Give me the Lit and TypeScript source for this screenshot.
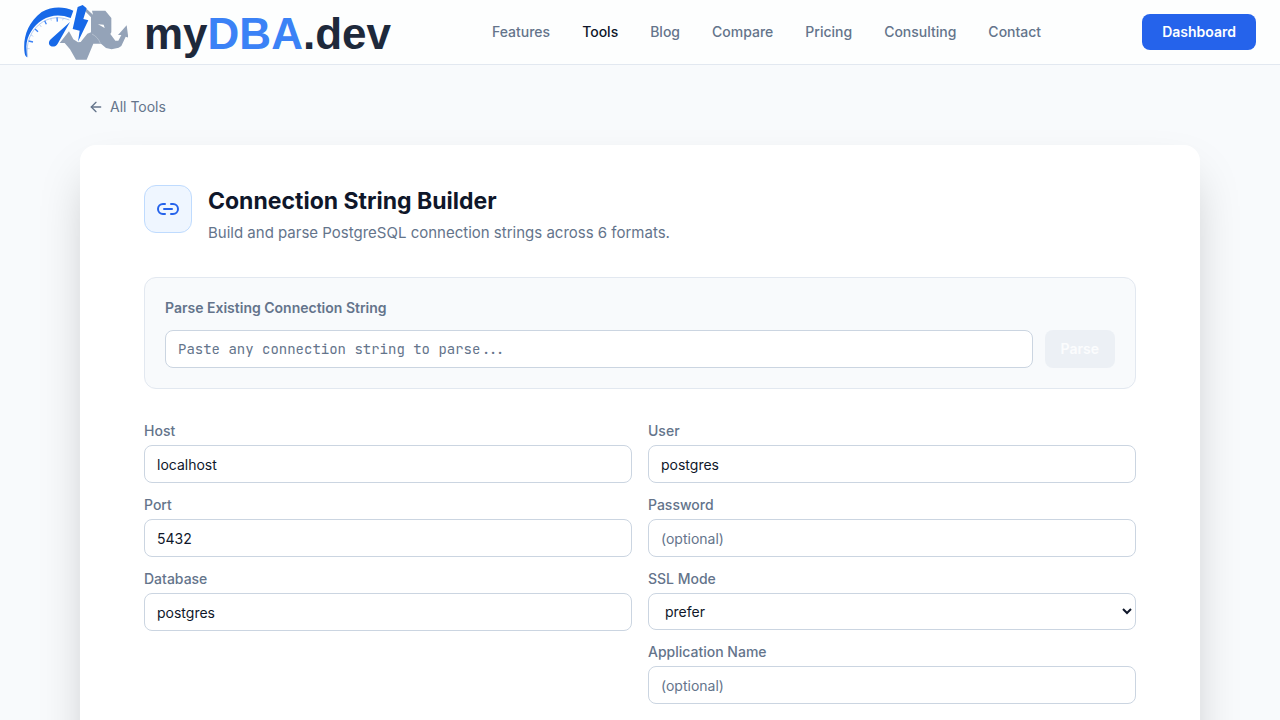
import { LitElement, html, css } from "lit";
import { customElement, state } from "lit/decorators.js";

interface NavItem {
  label: string;
  active?: boolean;
}

const NAV: NavItem[] = [
  { label: "Features" },
  { label: "Tools", active: true },
  { label: "Blog" },
  { label: "Compare" },
  { label: "Pricing" },
  { label: "Consulting" },
  { label: "Contact" },
];

const SSL_MODES = ["disable", "allow", "prefer", "require", "verify-ca", "verify-full"];

@customElement("site-header")
class SiteHeader extends LitElement {
  static styles = css`
    :host {
      display: block;
      background: #fdfefe;
      border-bottom: 1px solid #e2e8f0;
    }
    .bar {
      display: flex;
      align-items: center;
      justify-content: space-between;
      height: 64px;
      padding: 0 24px;
    }
    a {
      text-decoration: none;
    }
    .brand {
      display: flex;
      align-items: center;
      gap: 16px;
    }
    .mark {
      display: block;
      width: 104px;
      height: 56px;
    }
    .word {
      font: 700 44px/60px "Liberation Sans", Arial, sans-serif;
      color: #1e293b;
      white-space: nowrap;
      padding-top: 4px;
    }
    .accent {
      color: #3b82f6;
    }
    nav {
      display: flex;
      gap: 32px;
    }
    .link {
      font-size: 14px;
      line-height: 20px;
      font-weight: 500;
      color: #64748b;
    }
    .link.active {
      color: #0f172a;
    }
    .cta {
      padding: 8px 20px;
      border-radius: 8px;
      background: #2563eb;
      color: #fff;
      font-size: 14px;
      line-height: 20px;
      font-weight: 600;
    }
  `;

  render() {
    return html`
      <header class="bar">
        <a class="brand" href="#" aria-label="myDBA.dev home">
          <svg class="mark" viewBox="42 12 312 168" aria-hidden="true">
            <path fill="#94a3b8" d="M149 129 177 94 190 118 204 127 212 126 232 101 243 97V52L222 30 230 27 249 44 246 32H286L304 54V97L301 102 316 122H325L334 105 324 105 350 76 355 113 347 110 334 138 326 143 305 148 288 144 273 131H250L230 179H198L180 148L164 129Z"/>
            <path fill="#fdfefe" d="M264 73 281 74 284 84Z"/>
            <path fill="none" stroke="#c3ccd8" stroke-width="2" d="M246 102 C258 108 266 117 271 130"/>
            <path fill="none" stroke="#8fb2ea" stroke-width="2" d="M53 172C46 130 62 88 98 66 124 50 153 50 178 60"/>
            <path fill="#1769e8" d="M44 160C38 118 50 70 95 36 126 19 160 19 190 32L182 54C150 42 122 45 97 60 70 77 50 108 49 140L51 172C47 170 45 166 44 160Z"/>
            <path fill="none" stroke="#3b82f6" stroke-width="4" d="M56 123 69 126M75 87 84 95M104 62 109 73M141 52 142 65"/>
            <path fill="none" stroke="#a3c0ee" stroke-width="2" d="M51 146H59M63 105 70 109M89 74 94 81M122 55 124 62M160 54 158 61"/>
            <path fill="#1769e8" d="M180 66 143 131C137 142 122 143 117 132 116 125 119 121 123 117Z"/>
            <path fill="#1769e8" d="M188 87 203 21 218 15 230 25 220 57 235 61 204 125 209 92Z"/>
          </svg>
          <span class="word">my<span class="accent">DBA</span>.dev</span>
        </a>
        <nav aria-label="Main">
          ${NAV.map(
            (n) => html`<a class="link ${n.active ? "active" : ""}" href="#">${n.label}</a>`
          )}
        </nav>
        <a class="cta" href="#">Dashboard</a>
      </header>
    `;
  }
}

@customElement("app-root")
class AppRoot extends LitElement {
  @state() private source = "";

  static styles = css`
    :host {
      display: block;
      min-height: 100vh;
      background: #f8fafc;
      color: #0f172a;
      font-family: Inter, "Liberation Sans", sans-serif;
      font-size: 14px;
      line-height: 20px;
    }
    *,
    *::before {
      box-sizing: border-box;
    }
    main {
      max-width: 1120px;
      margin: 0 auto;
      padding: 32px 0;
    }
    .back {
      display: flex;
      align-items: center;
      gap: 6px;
      width: fit-content;
      padding: 0 8px;
      color: #64748b;
      text-decoration: none;
    }
    .back svg {
      width: 16px;
      height: 16px;
    }
    .card {
      margin-top: 28px;
      padding: 40px 64px 128px;
      border-radius: 16px;
      background: #fff;
      box-shadow: 0 25px 50px -12px rgba(0, 0, 0, 0.25);
    }
    .intro {
      display: flex;
      gap: 16px;
    }
    .badge {
      display: grid;
      place-items: center;
      width: 48px;
      height: 48px;
      border: 1px solid #bfdbfe;
      border-radius: 12px;
      background: #eff6ff;
      color: #2563eb;
    }
    .badge svg {
      width: 24px;
      height: 24px;
    }
    h1 {
      margin: 0;
      font-size: 23px;
      line-height: 32px;
      font-weight: 700;
    }
    .lead {
      margin: 4px 0 0;
      font-size: 15px;
      line-height: 24px;
      color: #64748b;
    }
    .parse {
      display: grid;
      gap: 12px;
      margin: 32px 0;
      padding: 20px;
      border: 1px solid #e2e8f0;
      border-radius: 12px;
      background: #f8fafc;
    }
    .parse label {
      font-weight: 600;
      color: #64748b;
    }
    .row {
      display: flex;
      gap: 12px;
    }
    input,
    select {
      display: block;
      width: 100%;
      min-width: 0;
      height: 38px;
      padding: 8px 12px;
      border: 1px solid #cbd5e1;
      border-radius: 8px;
      background: #fff;
      color: #0f172a;
      font: inherit;
    }
    select {
      height: 37px;
    }
    input::placeholder {
      color: #64748b;
      opacity: 1;
    }
    .mono {
      flex: 1;
      font-family: "JetBrains Mono", "Liberation Mono", monospace;
    }
    button {
      padding: 8px 16px;
      border: 0;
      border-radius: 8px;
      background: #2563eb;
      color: #fff;
      font: inherit;
      font-weight: 600;
    }
    button:disabled {
      background: #e2e8f0;
      opacity: 0.5;
    }
    .fields {
      display: grid;
      grid-template-columns: 1fr 1fr;
      gap: 16px;
      align-items: start;
    }
    .column {
      display: grid;
      gap: 12px;
    }
    .field {
      display: grid;
      gap: 4px;
    }
    .field label {
      font-weight: 500;
      color: #64748b;
    }
  `;

  private field(id: string, label: string, value = "", placeholder = "", type = "text") {
    return html`
      <div class="field">
        <label for=${id}>${label}</label>
        <input id=${id} type=${type} .value=${value} placeholder=${placeholder} />
      </div>
    `;
  }

  render() {
    return html`
      <site-header></site-header>
      <main>
        <a class="back" href="#">
          <svg viewBox="0 0 24 24" fill="none" stroke="currentColor" stroke-width="2" stroke-linecap="round" stroke-linejoin="round" aria-hidden="true">
            <path d="m12 19-7-7 7-7" /><path d="M19 12H5" />
          </svg>
          All Tools
        </a>
        <section class="card">
          <div class="intro">
            <div class="badge">
              <svg viewBox="0 0 24 24" fill="none" stroke="currentColor" stroke-width="2" stroke-linecap="round" stroke-linejoin="round" aria-hidden="true">
                <path d="M9 17H7A5 5 0 0 1 7 7h2" /><path d="M15 7h2a5 5 0 1 1 0 10h-2" /><path d="M8 12h8" />
              </svg>
            </div>
            <div>
              <h1>Connection String Builder</h1>
              <p class="lead">Build and parse PostgreSQL connection strings across 6 formats.</p>
            </div>
          </div>
          <div class="parse">
            <label for="source">Parse Existing Connection String</label>
            <div class="row">
              <input
                id="source"
                class="mono"
                type="text"
                placeholder="Paste any connection string to parse..."
                .value=${this.source}
                @input=${(e: Event) => (this.source = (e.target as HTMLInputElement).value)}
              />
              <button type="button" ?disabled=${!this.source.trim()}>Parse</button>
            </div>
          </div>
          <div class="fields">
            <div class="column">
              ${this.field("host", "Host", "localhost")}
              ${this.field("port", "Port", "5432")}
              ${this.field("database", "Database", "postgres")}
            </div>
            <div class="column">
              ${this.field("user", "User", "postgres")}
              ${this.field("password", "Password", "", "(optional)", "password")}
              <div class="field">
                <label for="ssl">SSL Mode</label>
                <select id="ssl">
                  ${SSL_MODES.map((m) => html`<option ?selected=${m === "prefer"}>${m}</option>`)}
                </select>
              </div>
              ${this.field("app", "Application Name", "", "(optional)")}
            </div>
          </div>
        </section>
      </main>
    `;
  }
}
